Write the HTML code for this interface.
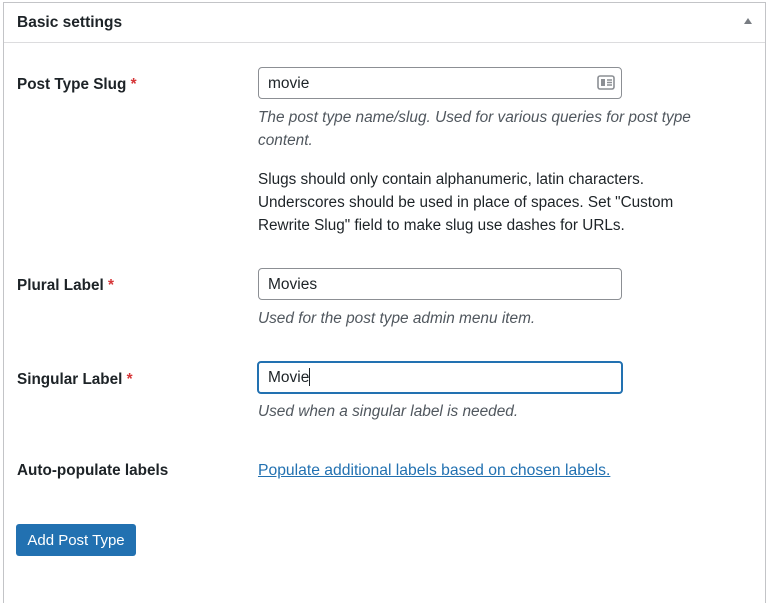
<!DOCTYPE html>
<html><head><style>
body{margin:0;background:#fff;width:768px;height:588px;overflow:hidden;font-family:"Liberation Sans",sans-serif;color:#1d2327;}
.box{position:absolute;left:3px;top:2px;width:761px;height:600px;border:1px solid #c3c4c7;border-bottom:none;}
.hd{position:absolute;left:0;top:0;width:761px;height:39px;border-bottom:1px solid #dcdcde;}
.hd span{position:absolute;left:13px;top:11px;font-size:15.5px;font-weight:bold;}
.tri{position:absolute;right:13px;top:15px;width:0;height:0;border-left:4px solid transparent;border-right:4px solid transparent;border-bottom:6px solid #787c82;}
.lbl{position:absolute;left:17px;font-size:15.3px;font-weight:bold;}
.lbl i{color:#d63638;font-style:normal;}
.inp{position:absolute;left:258px;width:362px;height:30px;border:1px solid #8c8f94;border-radius:4px;font-size:15.5px;line-height:31px;text-indent:9px;box-sizing:content-box;}
.foc{border:2px solid #2271b1;left:257px;height:29px;width:362px;}
.d{position:absolute;left:258px;font-size:15.4px;font-style:italic;color:#50575e;line-height:23px;}
.p{position:absolute;left:258px;font-size:15.3px;line-height:23px;color:#1d2327;}
.btn{position:absolute;left:16px;top:524px;width:120px;height:32px;background:#2271b1;border-radius:3px;color:#fff;font-size:15px;line-height:33px;text-align:center;}
</style></head><body>
<div class="box"><div class="hd"><span>Basic settings</span><div class="tri"></div></div></div>
<div class="lbl" style="top:76px">Post Type Slug <i>*</i></div>
<div class="inp" style="top:67px">movie
<svg style="position:absolute;right:6px;top:7px" width="18" height="15" viewBox="0 0 18 15"><rect x="1" y="1" width="16" height="13" rx="2" fill="none" stroke="#8c8f94" stroke-width="1.6"/><rect x="4" y="4" width="4" height="7" fill="#8c8f94"/><path d="M10 5h5M10 7.5h5M10 10h5" stroke="#8c8f94" stroke-width="1.4"/></svg></div>
<div class="d" style="top:106px">The post type name/slug. Used for various queries for post type<br>content.</div>
<div class="p" style="top:168px">Slugs should only contain alphanumeric, latin characters.<br>Underscores should be used in place of spaces. Set "Custom<br>Rewrite Slug" field to make slug use dashes for URLs.</div>
<div class="lbl" style="top:277px">Plural Label <i>*</i></div>
<div class="inp" style="top:268px">Movies</div>
<div class="d" style="top:307px">Used for the post type admin menu item.</div>
<div class="lbl" style="top:371px">Singular Label <i>*</i></div>
<div class="inp foc" style="top:361px;line-height:30px;text-indent:9px">Movie<span style="display:inline-block;width:1px;height:18px;background:#1d2327;vertical-align:-4px;text-indent:0"></span></div>
<div class="d" style="top:400px">Used when a singular label is needed.</div>
<div class="lbl" style="top:462px">Auto-populate labels</div>
<div class="p" style="top:459px;color:#2271b1;text-decoration:underline;font-size:15.7px">Populate additional labels based on chosen labels.</div>
<div class="btn">Add Post Type</div>
</body></html>
